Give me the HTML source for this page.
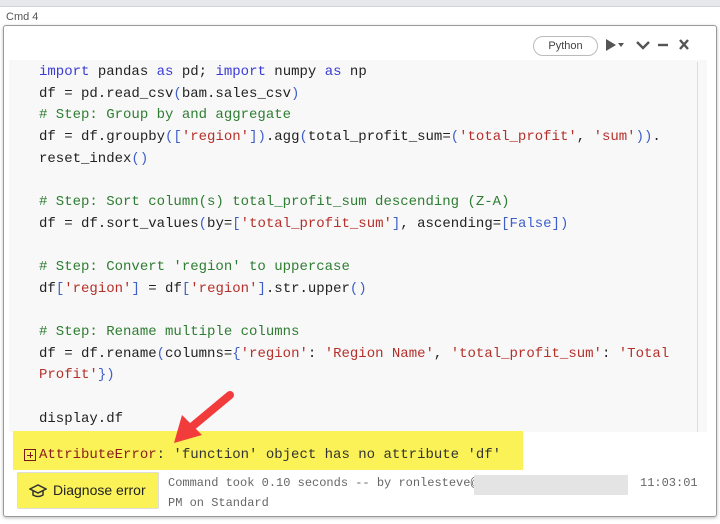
<!DOCTYPE html><html><head><style>
body{margin:0;width:720px;height:524px;background:#fff;position:relative;overflow:hidden;font-family:"Liberation Mono",monospace}
.top{position:absolute;left:0;top:0;width:720px;height:6px;background:#e6e9ec;border-bottom:1px solid #d0d4d8}
.cmd{position:absolute;left:6px;top:11px;font:11px "Liberation Sans",sans-serif;color:#555}
.cell{position:absolute;left:3px;top:25px;width:712px;height:490px;border:1px solid #9a9a9a;border-radius:3px;box-shadow:0 1px 3px #bbb}
.code{position:absolute;left:9px;top:60px;width:698px;height:372px;background:#f8f8f8}
.sb{position:absolute;left:697px;top:62px;width:1px;height:370px;background:#ddd}
pre{position:absolute;left:39px;top:62px;margin:0;font:14px/21.65px "Liberation Mono",monospace;color:#222}
.k{color:#3a3ad6}.s{color:#b5302a}.c{color:#2e7d32}.b{color:#3e5fc8}
.py{position:absolute;left:533px;top:36px;width:63px;height:18px;border:1px solid #bbb;border-radius:10px;font:11px "Liberation Sans",sans-serif;color:#444;text-align:center;line-height:18px}
.err{position:absolute;left:13px;top:431px;width:510px;height:39px;background:#faf257}
.et{position:absolute;left:39px;top:447px;font:14px "Liberation Mono",monospace;color:#333;white-space:pre}
.box{position:absolute;left:24px;top:449px;width:10px;height:10px;border:1px solid #7a1a1a}
.box:before{content:"";position:absolute;left:2px;top:4.5px;width:6px;height:1px;background:#7a1a1a}
.box:after{content:"";position:absolute;left:4.5px;top:2px;width:1px;height:6px;background:#7a1a1a}
.btn{position:absolute;left:17px;top:472px;width:140px;height:35px;background:#faf257;border:1px solid #ddd;border-radius:2px;font:14px "Liberation Sans",sans-serif;color:#222;line-height:35px}
.meta{position:absolute;left:168px;top:473px;font:12px/20px "Liberation Mono",monospace;color:#666;white-space:pre}
.red{position:absolute;left:474px;top:475px;width:154px;height:20px;background:#e4e4e4}
.time{position:absolute;left:640px;top:473px;font:12px/20px "Liberation Mono",monospace;color:#666}
</style></head><body>
<div class="top"></div>
<div class="cmd">Cmd 4</div>
<div class="cell"></div>
<div class="py">Python</div>
<svg style="position:absolute;left:600px;top:36px" width="95" height="18">
<path d="M6 3 L16 9 L6 15Z" fill="#555"/><path d="M18 7 L24 7 L21 11Z" fill="#555"/>
<path d="M37 6 L43 12 L49 6" stroke="#555" stroke-width="2.4" fill="none"/>
<path d="M58 9 H68" stroke="#555" stroke-width="2.4"/>
<path d="M80 4 L88 13 M88 4 L80 13" stroke="#555" stroke-width="2.4"/>
</svg>
<div class="code"></div><div class="sb"></div>
<pre><span class="k">import</span> pandas <span class="k">as</span> pd; <span class="k">import</span> numpy <span class="k">as</span> np
df = pd.read_csv<span class="b">(</span>bam.sales_csv<span class="b">)</span>
<span class="c"># Step: Group by and aggregate</span>
df = df.groupby<span class="b">([</span><span class="s">'region'</span><span class="b">])</span>.agg<span class="b">(</span>total_profit_sum=<span class="b">(</span><span class="s">'total_profit'</span>, <span class="s">'sum'</span><span class="b">))</span>.
reset_index<span class="b">()</span>

<span class="c"># Step: Sort column(s) total_profit_sum descending (Z-A)</span>
df = df.sort_values<span class="b">(</span>by=<span class="b">[</span><span class="s">'total_profit_sum'</span><span class="b">]</span>, ascending=<span class="b">[False])</span>

<span class="c"># Step: Convert 'region' to uppercase</span>
df<span class="b">[</span><span class="s">'region'</span><span class="b">]</span> = df<span class="b">[</span><span class="s">'region'</span><span class="b">]</span>.str.upper<span class="b">()</span>

<span class="c"># Step: Rename multiple columns</span>
df = df.rename<span class="b">(</span>columns=<span class="b">{</span><span class="s">'region'</span>: <span class="s">'Region Name'</span>, <span class="s">'total_profit_sum'</span>: <span class="s">'Total</span>
<span class="s">Profit'</span><span class="b">})</span>

display.df</pre>
<div class="err"></div>
<div class="box"></div>
<div class="et"><span style="color:#8a1c1c">AttributeError</span>: 'function' object has no attribute 'df'</div>
<div class="btn"><svg style="position:absolute;left:11px;top:11px" width="18" height="14"><path d="M1 5 L9 1 L17 5 L9 9Z M4 7 V11 Q9 14 14 11 V7" stroke="#333" stroke-width="1.5" fill="none"/></svg><span style="position:absolute;left:35px">Diagnose error</span></div>
<div class="meta">Command took 0.10 seconds -- by ronlesteve@
PM on Standard</div>
<div class="red"></div>
<div class="time">11:03:01</div>
<svg style="position:absolute;left:160px;top:385px" width="90" height="70"><path d="M70 10 L28 45" stroke="#f23c3c" stroke-width="8" stroke-linecap="round"/><path d="M14 58 L22 30 L42 50Z" fill="#f23c3c"/></svg>
</body></html>
